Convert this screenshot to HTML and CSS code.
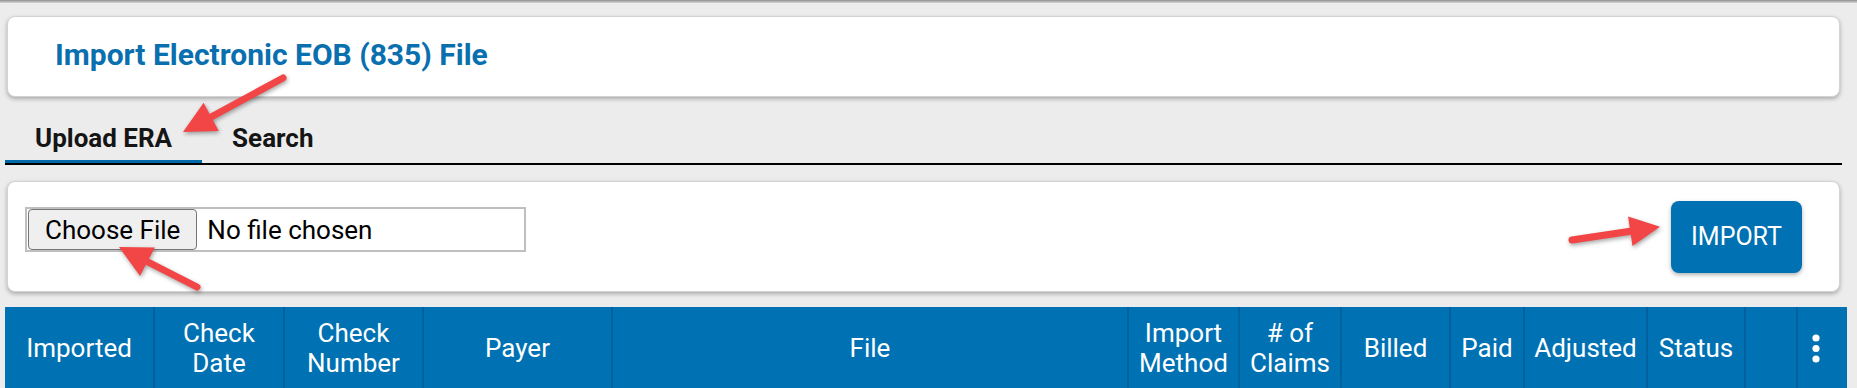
FILE: index.html
```html
<!DOCTYPE html>
<html lang="en">
<head>
<meta charset="utf-8">
<title>Import Electronic EOB (835) File</title>
<link rel="stylesheet" href="styles.css">
</head>
<body>
<div class="topline"></div>
<main class="page">
  <section class="card title-card">
    <h1 class="page-title">Import Electronic EOB (835) File</h1>
  </section>

  <nav class="tabs">
    <div class="tab tab-active">Upload ERA</div>
    <div class="tab">Search</div>
  </nav>

  <section class="card upload-card">
    <div class="file-input">
      <span class="file-btn">Choose File</span>
      <span class="file-name">No file chosen</span>
    </div>
    <button class="import-btn" type="button">IMPORT</button>
  </section>

  <div class="table-head">
    <div class="th">Imported</div>
    <div class="th">Check<br>Date</div>
    <div class="th">Check<br>Number</div>
    <div class="th">Payer</div>
    <div class="th">File</div>
    <div class="th">Import<br>Method</div>
    <div class="th"># of<br>Claims</div>
    <div class="th">Billed</div>
    <div class="th">Paid</div>
    <div class="th">Adjusted</div>
    <div class="th">Status</div>
    <div class="th"></div>
    <div class="th th-menu">
      <svg class="kebab" width="8" height="29" viewBox="0 0 8 29">
        <circle cx="4" cy="4" r="3.6" fill="#fff"/>
        <circle cx="4" cy="14.5" r="3.6" fill="#fff"/>
        <circle cx="4" cy="25" r="3.6" fill="#fff"/>
      </svg>
    </div>
  </div>
</main>

<svg class="annotations" width="1857" height="388" viewBox="0 0 1857 388">
  <g class="arrow">
    <line x1="283" y1="78" x2="212" y2="116.5" stroke="#f24545" stroke-width="7" stroke-linecap="round"/>
    <polygon points="183,132 218.8,130.9 203.6,102.7" fill="#f24545"/>
  </g>
  <g class="arrow">
    <line x1="197" y1="287" x2="148" y2="262" stroke="#f24545" stroke-width="7" stroke-linecap="round"/>
    <polygon points="119,247 154.8,247.6 140,276" fill="#f24545"/>
  </g>
  <g class="arrow">
    <line x1="1572" y1="240" x2="1632" y2="231" stroke="#f24545" stroke-width="7" stroke-linecap="round"/>
    <polygon points="1660,226.7 1632.5,246 1628.1,216.4" fill="#f24545"/>
  </g>
</svg>
</body>
</html>
```
FILE: styles.css
```css
html, body {
  margin: 0;
  padding: 0;
  background: #ececec;
  font-family: Roboto, "Liberation Sans", Arial, sans-serif;
  overflow: hidden;
}

body {
  width: 1857px;
  height: 388px;
  position: relative;
}

.topline {
  height: 3px;
  background: linear-gradient(#8e8e8e, #d9d9d9);
}

.page {
  padding-left: 5px;
  width: 1842px;
}

.card {
  box-sizing: border-box;
  width: 1833px;
  margin-left: 2px;
  background: #fff;
  border: 1px solid #d3d3d3;
  border-radius: 8px;
  box-shadow: 0 2px 4px rgba(0, 0, 0, 0.28);
}

.title-card {
  margin-top: 13px;
  height: 81px;
  display: flex;
  align-items: center;
  padding-left: 47px;
}

.page-title {
  margin: 0 0 4px 0;
  font-size: 30px;
  line-height: 30px;
  font-weight: 700;
  color: #0a6fae;
}

.tabs {
  display: flex;
  margin-top: 16px;
  width: 1837px;
  border-bottom: 2px solid #000;
}

.tab {
  padding: 10px 30px 7px;
  font-size: 26px;
  line-height: 30px;
  font-weight: 700;
  color: #151515;
  border-bottom: 3px solid transparent;
}

.tab-active {
  border-bottom-color: #0069aa;
}

.upload-card {
  margin-top: 16px;
  height: 111px;
  display: flex;
  align-items: center;
  justify-content: space-between;
  padding: 0 37px 0 17px;
}

.file-input {
  align-self: flex-start;
  margin-top: 25px;
  box-sizing: border-box;
  width: 501px;
  height: 45px;
  border: 2px solid #bfbfbf;
  display: flex;
  align-items: center;
}

.file-btn {
  box-sizing: border-box;
  height: 41px;
  margin-left: 1px;
  padding: 0 16px;
  display: flex;
  align-items: center;
  border: 1px solid #767676;
  border-radius: 4px;
  background: #efefef;
  font-size: 26px;
  color: #000;
}

.file-name {
  margin-left: 10px;
  font-size: 26px;
  color: #000;
}

.import-btn {
  width: 131px;
  height: 72px;
  border: none;
  border-radius: 8px;
  background: #0071b2;
  color: #fff;
  font-family: Roboto, "Liberation Sans", Arial, sans-serif;
  font-size: 25px;
  padding: 0;
  box-shadow: 0 2px 4px rgba(0, 0, 0, 0.3);
}

.table-head {
  margin-top: 15px;
  width: 1842px;
  display: grid;
  grid-template-columns: 148px 130px 139px 189px 516px 111px 102px 109px 74px 123px 98px 52px 51px;
  background: #0071b2;
  color: #fff;
}

.th {
  box-sizing: border-box;
  min-height: 82px;
  padding: 11px 2px;
  display: flex;
  align-items: center;
  justify-content: center;
  text-align: center;
  font-size: 26px;
  line-height: 30px;
  border-left: 2px solid #00619c;
}

.th:first-child {
  border-left: none;
}

.th-menu {
  justify-content: flex-start;
  padding-left: 14px;
}

.kebab {
  display: block;
}

.annotations {
  position: absolute;
  top: 0;
  left: 0;
  pointer-events: none;
}

.arrow {
  filter: drop-shadow(1px 2px 2px rgba(0, 0, 0, 0.35));
}
```
